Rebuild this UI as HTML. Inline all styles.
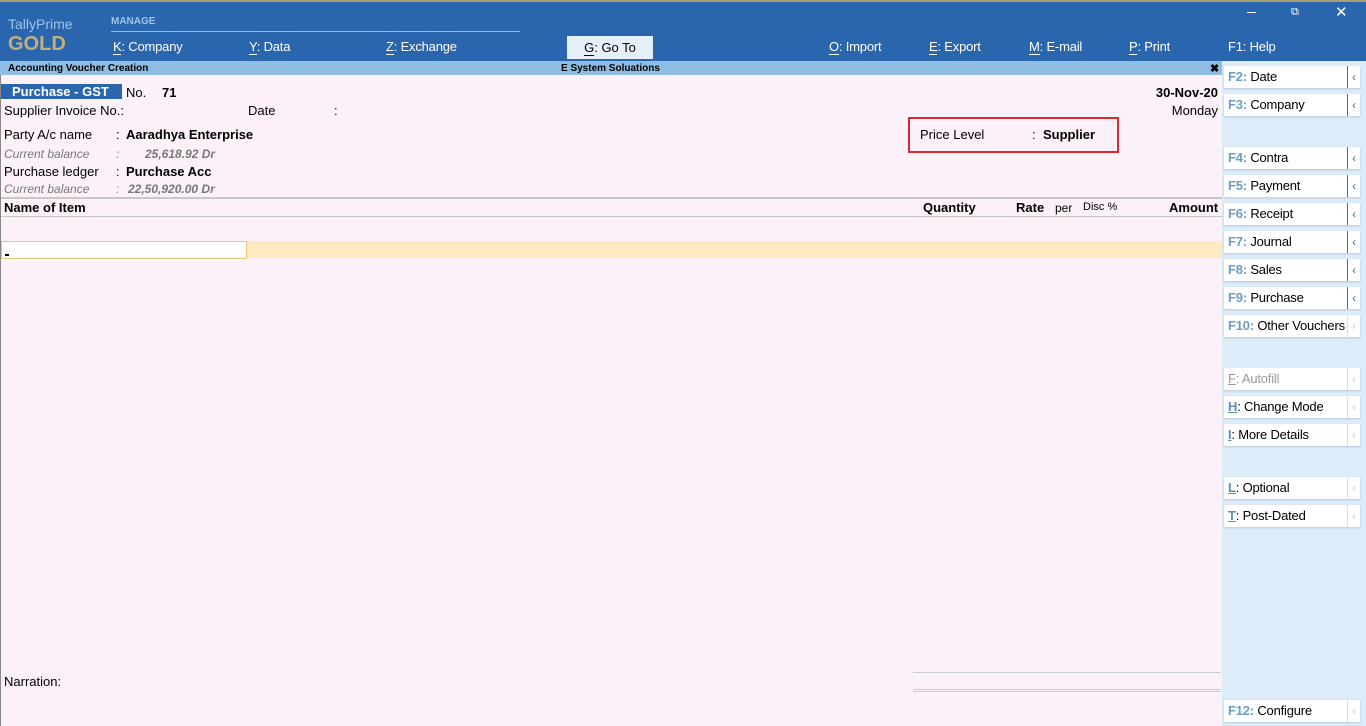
<!DOCTYPE html>
<html><head><meta charset="utf-8"><style>
*{margin:0;padding:0;box-sizing:border-box}
body{width:1366px;height:726px;overflow:hidden;position:relative;font-family:"Liberation Sans",sans-serif;font-size:12px;color:#000;background:#fdf1f9}
.a{position:absolute;white-space:nowrap}
#top{position:absolute;left:0;top:0;width:1366px;height:61px;background:#2a66ae;border-top:2px solid #a89f74}
.m{color:#fff;font-size:13px;letter-spacing:-0.2px}
.m u{text-decoration:none;border-bottom:1px solid #fff}
#tb{position:absolute;left:0;top:61px;width:1222px;height:14px;background:#8ebde3;font-size:10px;font-weight:bold}
#rp{position:absolute;left:1222px;top:61px;width:144px;height:665px;background:#dcecf9}
.b{position:absolute;left:2px;width:136px;height:22px;background:#fff;box-shadow:0 1px 2px #b8c8d8;font-size:13px;line-height:22px;padding-left:4px;letter-spacing:-0.2px}
.b i{font-style:normal;color:#6a9ec2;font-weight:bold}
.b:after{content:"‹";position:absolute;right:0;top:0;width:12px;height:22px;border-left:1px solid #3a6fa8;text-align:center;color:#3a6fa8;font-size:12px}
.b.d:after{border-left:1px solid #ddd;color:#ccc}
.g{color:#999}
.u i{color:#5a8fb8;text-decoration:underline}
.it{font-style:italic;color:#777}
</style></head><body>
<div id="top">
<div class="a" style="left:8px;top:14px;color:#9ec4ea;font-size:14px">TallyPrime</div>
<div class="a" style="left:8px;top:31px;color:#bfb07e;font-size:20px;font-weight:bold">GOLD</div>
<div class="a" style="left:111px;top:14px;color:#9ec4ea;font-size:10px;font-weight:bold">MANAGE</div>
<div class="a" style="left:111px;top:29px;width:409px;border-top:1px solid #8ebde3"></div>
<div class="a m" style="left:113px;top:37px"><u>K</u>: Company</div>
<div class="a m" style="left:249px;top:37px"><u>Y</u>: Data</div>
<div class="a m" style="left:386px;top:37px"><u>Z</u>: Exchange</div>
<div class="a" style="left:567px;top:34px;width:86px;height:23px;background:#e6f0fa;font-size:13px;text-align:center;line-height:23px"><span style="border-bottom:1px solid #000">G</span>: Go To</div>
<div class="a m" style="left:829px;top:37px"><u>O</u>: Import</div>
<div class="a m" style="left:929px;top:37px"><u>E</u>: Export</div>
<div class="a m" style="left:1029px;top:37px"><u>M</u>: E-mail</div>
<div class="a m" style="left:1129px;top:37px"><u>P</u>: Print</div>
<div class="a m" style="left:1228px;top:37px">F1: Help</div>
<div class="a" style="left:1247px;top:10px;width:9px;border-top:1px solid #fff"></div>
<div class="a" style="left:1291px;top:4px;color:#fff;font-size:11px">⧉</div>
<div class="a" style="left:1335px;top:1px;color:#fff;font-size:15px">✕</div>
</div>
<div id="tb"><span class="a" style="left:8px;top:2px">Accounting Voucher Creation</span><span class="a" style="left:561px;top:2px">E System Soluations</span><span class="a" style="left:1210px;top:1px;font-size:11px">✖</span></div>
<div class="a" style="left:0;top:84px;width:122px;height:15px;background:#2a66ae;color:#fff;font-size:13px;font-weight:bold;padding-left:12px;line-height:15px">Purchase - GST</div>
<div class="a" style="left:126px;top:85px;font-size:13px">No.</div>
<div class="a" style="left:162px;top:85px;font-size:13px;font-weight:bold">71</div>
<div class="a" style="left:4px;top:103px;font-size:13px">Supplier Invoice No.:</div>
<div class="a" style="left:248px;top:103px;font-size:13px">Date</div>
<div class="a" style="left:334px;top:103px;font-size:13px">:</div>
<div class="a" style="right:148px;top:85px;font-size:13px;font-weight:bold">30-Nov-20</div>
<div class="a" style="right:148px;top:103px;font-size:13px">Monday</div>
<div class="a" style="left:4px;top:127px;font-size:13px">Party A/c name</div>
<div class="a" style="left:116px;top:127px;font-size:13px">:</div>
<div class="a" style="left:126px;top:127px;font-size:13px;font-weight:bold">Aaradhya Enterprise</div>
<div class="a it" style="left:4px;top:147px">Current balance</div>
<div class="a it" style="left:116px;top:147px">:</div>
<div class="a it" style="left:145px;top:147px;font-weight:bold">25,618.92 Dr</div>
<div class="a" style="left:4px;top:164px;font-size:13px">Purchase ledger</div>
<div class="a" style="left:116px;top:164px;font-size:13px">:</div>
<div class="a" style="left:126px;top:164px;font-size:13px;font-weight:bold">Purchase Acc</div>
<div class="a it" style="left:4px;top:182px">Current balance</div>
<div class="a it" style="left:116px;top:182px">:</div>
<div class="a it" style="left:128px;top:182px;font-weight:bold">22,50,920.00 Dr</div>
<div class="a" style="left:908px;top:117px;width:211px;height:36px;border:2px solid #d42a35"></div>
<div class="a" style="left:920px;top:127px;font-size:13px">Price Level</div>
<div class="a" style="left:1032px;top:127px;font-size:13px">:</div>
<div class="a" style="left:1043px;top:127px;font-size:13px;font-weight:bold">Supplier</div>
<div class="a" style="left:0;top:197px;width:1222px;border-top:2px solid #c8c8c8"></div>
<div class="a" style="left:4px;top:200px;font-size:13px;font-weight:bold">Name of Item</div>
<div class="a" style="left:923px;top:200px;font-size:13px;font-weight:bold">Quantity</div>
<div class="a" style="left:1016px;top:200px;font-size:13px;font-weight:bold">Rate</div>
<div class="a" style="left:1055px;top:201px;font-size:12px">per</div>
<div class="a" style="left:1083px;top:201px;font-size:11px">Disc %</div>
<div class="a" style="left:1169px;top:200px;font-size:13px;font-weight:bold">Amount</div>
<div class="a" style="left:0;top:216px;width:1222px;border-top:1px solid #c8c8c8"></div>
<div class="a" style="left:0;top:241px;width:1222px;height:17px;background:#fde9c2"></div>
<div class="a" style="left:1px;top:241px;width:246px;height:18px;background:#fff;border:1px solid #e0c878"></div>
<div class="a" style="left:5px;top:254px;width:4px;height:2px;background:#000"></div>
<div class="a" style="left:0;top:75px;height:651px;border-left:1px solid #888"></div>
<div class="a" style="left:913px;top:672px;width:308px;border-top:1px solid #ccc"></div>
<div class="a" style="left:913px;top:689px;width:308px;border-top:1px solid #ccc"></div>
<div class="a" style="left:913px;top:691px;width:308px;border-top:1px solid #ccc"></div>
<div class="a" style="left:4px;top:674px;font-size:13px">Narration:</div>
<div id="rp">
<div class="b" style="top:5px"><i>F2:</i> Date</div>
<div class="b" style="top:33px"><i>F3:</i> Company</div>
<div class="b" style="top:86px"><i>F4:</i> Contra</div>
<div class="b" style="top:114px"><i>F5:</i> Payment</div>
<div class="b" style="top:142px"><i>F6:</i> Receipt</div>
<div class="b" style="top:170px"><i>F7:</i> Journal</div>
<div class="b" style="top:198px"><i>F8:</i> Sales</div>
<div class="b" style="top:226px"><i>F9:</i> Purchase</div>
<div class="b d" style="top:254px"><i>F10:</i> Other Vouchers</div>
<div class="b d g" style="top:307px"><span style="text-decoration:underline">F</span>: Autofill</div>
<div class="b d u" style="top:335px"><i>H</i>: Change Mode</div>
<div class="b d u" style="top:363px"><i>I</i>: More Details</div>
<div class="b d u" style="top:416px"><i>L</i>: Optional</div>
<div class="b d u" style="top:444px"><i>T</i>: Post-Dated</div>
<div class="b d" style="top:639px"><i>F12:</i> Configure</div>
</div>
</body></html>
